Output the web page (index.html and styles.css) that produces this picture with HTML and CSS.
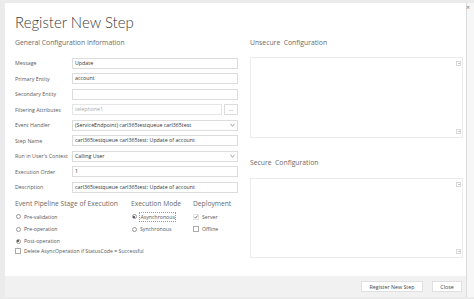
FILE: index.html
```html
<!DOCTYPE html>
<html>
<head>
<meta charset="utf-8">
<link rel="stylesheet" href="styles.css">
</head>
<body>
<div class="page">
  <div class="dialog">
    <div class="header">
      <h1 class="title">Register New Step</h1>
      <span class="close">&#215;</span>
    </div>
    <div class="content">
      <div class="left">
        <h2 class="section">General Configuration Information</h2>
        <div class="form">
          <span class="label">Message</span><div class="input">Update</div>
          <span class="label">Primary Entity</span><div class="input">account</div>
          <span class="label">Secondary Entity</span><div class="input"></div>
          <span class="label">Filtering Attributes</span>
          <div class="input-row"><div class="input disabled">telephone1</div><div class="dots">...</div></div>
          <span class="label">Event Handler</span>
          <div class="input select">(ServiceEndpoint) carl365testqueue carl365test<svg class="chev" viewBox="0 0 6 4"><path d="M0.5 0.8 L3 3.2 L5.5 0.8" fill="none" stroke="#555" stroke-width="0.8"/></svg></div>
          <span class="label">Step Name</span><div class="input">carl365testqueue carl365test: Update of account</div>
          <span class="label">Run in User's Context</span>
          <div class="input select">Calling User<svg class="chev" viewBox="0 0 6 4"><path d="M0.5 0.8 L3 3.2 L5.5 0.8" fill="none" stroke="#555" stroke-width="0.8"/></svg></div>
          <span class="label">Execution Order</span><div class="input">1</div>
          <span class="label">Description</span><div class="input">carl365testqueue carl365test: Update of account</div>
        </div>
        <div class="options">
          <h3 class="opt-head">Event Pipeline Stage of Execution</h3>
          <h3 class="opt-head">Execution Mode</h3>
          <h3 class="opt-head">Deployment</h3>
          <div class="opt"><span class="radio"></span>Pre-validation</div>
          <div class="opt"><span class="radio on"></span><span class="focus">Asynchronous</span></div>
          <div class="opt"><span class="check on"><svg viewBox="0 0 6 6"><path d="M0.8 3.2 L2.3 4.8 L5.3 0.9" fill="none" stroke="#333" stroke-width="0.9"/></svg></span>Server</div>
          <div class="opt"><span class="radio"></span>Pre-operation</div>
          <div class="opt"><span class="radio"></span>Synchronous</div>
          <div class="opt"><span class="check"></span>Offline</div>
          <div class="opt wide"><span class="radio on"></span>Post-operation</div>
          <div class="opt wide"><span class="check"></span>Delete AsyncOperation if StatusCode = Successful</div>
        </div>
      </div>
      <div class="right">
        <h2 class="section">Unsecure&nbsp; Configuration</h2>
        <div class="textarea first">
          <div class="sb"><span class="arrow up"></span><span class="arrow down"></span></div>
        </div>
        <h2 class="section second">Secure&nbsp; Configuration</h2>
        <div class="textarea">
          <div class="sb"><span class="arrow up"></span><span class="arrow down"></span></div>
        </div>
      </div>
    </div>
    <div class="footer">
      <button class="btn">Register New Step</button>
      <button class="btn close-btn">Close</button>
    </div>
  </div>
  <div class="vscroll"></div>
</div>
</body>
</html>
```

FILE: styles.css
```css
html, body {
  margin: 0;
  padding: 0;
}
body {
  width: 474px;
  height: 299px;
  overflow: hidden;
  background: #ebebeb;
  font-family: "Open Sans", "Noto Sans", sans-serif;
  color: #333;
}
.page {
  display: flex;
  height: 299px;
  padding-left: 5px;
  box-sizing: border-box;
}
.dialog {
  width: 462px;
  margin-top: 3px;
  height: 294px;
  background: #fff;
  display: flex;
  flex-direction: column;
  position: relative;
}
.vscroll {
  width: 7px;
  margin-top: 3px;
  height: 294px;
  background: #f7f7f7;
  border-left: 1px solid #dcdcdc;
}
.header {
  height: 34px;
  padding-left: 10px;
  box-sizing: border-box;
}
.title {
  margin: 0;
  padding-top: 10px;
  font-family: "Lato", "Open Sans", sans-serif;
  font-size: 15px;
  line-height: 18px;
  font-weight: 300;
  color: #3a3a3a;
}
.close {
  position: absolute;
  right: -4px;
  top: 1px;
  font-size: 7px;
  line-height: 8px;
  color: #777;
}
.content {
  flex: 1;
  display: grid;
  grid-template-columns: 223px 213px;
  column-gap: 12px;
  padding-left: 10px;
}
.section {
  margin: 0;
  height: 12px;
  font-size: 6.8px;
  line-height: 12px;
  font-weight: 400;
  color: #6a6a6a;
  white-space: nowrap;
}
.form {
  margin-top: 6.25px;
  display: grid;
  grid-template-columns: 57px 166px;
  grid-auto-rows: 15.5px;
  align-items: center;
}
.label {
  font-size: 5.3px;
  color: #5a5a5a;
  white-space: nowrap;
}
.input {
  height: 11px;
  box-sizing: border-box;
  border: 1px solid #dcdcdc;
  font-size: 5.3px;
  line-height: 9px;
  padding-left: 2px;
  color: #333;
  white-space: nowrap;
  overflow: hidden;
  display: flex;
  align-items: center;
}
.input.disabled {
  flex: 1;
  color: #aaa;
  border-color: #e6e6e6;
}
.input.select {
  justify-content: space-between;
  padding-right: 2px;
}
.chev {
  width: 5px;
  height: 4px;
}
.input-row {
  display: flex;
  gap: 2px;
}
.dots {
  width: 14px;
  height: 11px;
  box-sizing: border-box;
  border: 1px solid #dcdcdc;
  font-size: 5px;
  line-height: 8px;
  text-align: center;
  color: #555;
}
.options {
  margin-top: 3.25px;
  display: grid;
  grid-template-columns: 116px 62px 45px;
  grid-template-rows: 12px 13px 12px 12px 8px;
  align-items: center;
}
.opt-head {
  margin: 0;
  font-size: 6.7px;
  font-weight: 400;
  color: #6a6a6a;
  white-space: nowrap;
  line-height: 12px;
}
.opt {
  display: flex;
  align-items: center;
  font-size: 5.2px;
  color: #555;
  white-space: nowrap;
}
.opt.wide {
  grid-column: 1 / 4;
}
.radio {
  width: 5px;
  height: 5px;
  box-sizing: border-box;
  border: 0.8px solid #999;
  border-radius: 50%;
  margin-left: 0.5px;
  margin-right: 3.5px;
  position: relative;
}
.radio.on::after {
  content: "";
  position: absolute;
  left: 0.6px;
  top: 0.6px;
  width: 2.2px;
  height: 2.2px;
  border-radius: 50%;
  background: #333;
}
.check {
  width: 6px;
  height: 6px;
  box-sizing: border-box;
  border: 0.8px solid #aaa;
  margin-right: 3px;
  display: flex;
}
.check.on {
  border-color: #e4e4e4;
}
.check svg {
  width: 100%;
  height: 100%;
}
.focus {
  outline: 0.5px dotted #999;
  padding: 0 0.5px;
}
.textarea {
  margin-top: 8px;
  height: 81px;
  box-sizing: border-box;
  border: 1px solid #ececec;
  display: flex;
  justify-content: flex-end;
}
.textarea:last-child {
  margin-top: 9px;
  height: 80px;
}
.section.second {
  margin-top: 19px;
}
.sb {
  width: 8px;
  display: flex;
  flex-direction: column;
  justify-content: space-between;
  align-items: center;
  padding: 3px 0;
}
.arrow {
  width: 5px;
  height: 5px;
  box-sizing: border-box;
  border: 0.6px solid #d8d8d8;
  position: relative;
}
.arrow::after {
  content: "";
  position: absolute;
  left: 1.1px;
  top: 1.3px;
  border-left: 1px solid transparent;
  border-right: 1px solid transparent;
}
.arrow.up::after {
  border-bottom: 1.2px solid #888;
}
.arrow.down::after {
  border-top: 1.2px solid #888;
}
.footer {
  height: 21px;
  background: #f1f1f1;
  display: flex;
  justify-content: flex-end;
  align-items: center;
  gap: 9px;
  padding-right: 4px;
}
.btn {
  height: 11px;
  width: 62px;
  padding: 0;
  background: #fff;
  border: 1px solid #e0e0e0;
  font-family: "Open Sans", "Noto Sans", sans-serif;
  font-size: 5.3px;
  color: #444;
}
.btn.close-btn {
  width: 30px;
}
```
